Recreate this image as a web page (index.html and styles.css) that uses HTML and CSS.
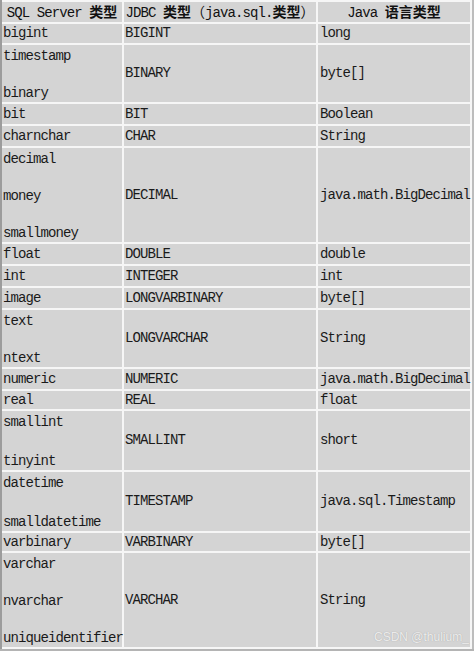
FILE: index.html
```html
<!DOCTYPE html>
<html lang="zh">
<head>
<meta charset="utf-8">
<title>SQL Server 类型映射</title>
<link rel="stylesheet" href="styles.css">
</head>
<body>
<div class="page">
  <div class="sheet">
    <div class="cell head"><span>SQL Server <span class="cjk">类型</span></span></div>
    <div class="cell head"><span>JDBC <span class="cjk">类型</span><span class="cjk paren open">（</span>java.sql.<span class="cjk">类型</span><span class="cjk paren close">）</span></span></div>
    <div class="cell head"><span>Java <span class="cjk">语言类型</span></span></div>

    <div class="cell">bigint</div>
    <div class="cell">BIGINT</div>
    <div class="cell c3">long</div>

    <div class="cell multi"><span>timestamp</span><span>binary</span></div>
    <div class="cell">BINARY</div>
    <div class="cell c3">byte[]</div>

    <div class="cell">bit</div>
    <div class="cell">BIT</div>
    <div class="cell c3">Boolean</div>

    <div class="cell">charnchar</div>
    <div class="cell">CHAR</div>
    <div class="cell c3">String</div>

    <div class="cell multi"><span>decimal</span><span>money</span><span>smallmoney</span></div>
    <div class="cell">DECIMAL</div>
    <div class="cell c3">java.math.BigDecimal</div>

    <div class="cell">float</div>
    <div class="cell">DOUBLE</div>
    <div class="cell c3">double</div>

    <div class="cell">int</div>
    <div class="cell">INTEGER</div>
    <div class="cell c3">int</div>

    <div class="cell">image</div>
    <div class="cell">LONGVARBINARY</div>
    <div class="cell c3">byte[]</div>

    <div class="cell multi"><span>text</span><span>ntext</span></div>
    <div class="cell">LONGVARCHAR</div>
    <div class="cell c3">String</div>

    <div class="cell">numeric</div>
    <div class="cell">NUMERIC</div>
    <div class="cell c3">java.math.BigDecimal</div>

    <div class="cell">real</div>
    <div class="cell">REAL</div>
    <div class="cell c3">float</div>

    <div class="cell multi"><span>smallint</span><span>tinyint</span></div>
    <div class="cell">SMALLINT</div>
    <div class="cell c3">short</div>

    <div class="cell multi"><span>datetime</span><span>smalldatetime</span></div>
    <div class="cell">TIMESTAMP</div>
    <div class="cell c3">java.sql.Timestamp</div>

    <div class="cell">varbinary</div>
    <div class="cell">VARBINARY</div>
    <div class="cell c3">byte[]</div>

    <div class="cell multi"><span>varchar</span><span>nvarchar</span><span>uniqueidentifier</span></div>
    <div class="cell">VARCHAR</div>
    <div class="cell c3">String</div>
  </div>
  <div class="watermark">CSDN @thulium_</div>
</div>
</body>
</html>
```

FILE: styles.css
```css
html, body {
  margin: 0;
  padding: 0;
}

body {
  background: #b4b4b4;
  width: 474px;
  height: 651px;
  overflow: hidden;
}

.page {
  position: relative;
  width: 474px;
  height: 651px;
}

.sheet {
  display: grid;
  grid-template-columns: 120px 192px 152px;
  grid-template-rows: 20px 19px 57px 20px 20px 94px 20px 20px 20px 57px 20px 18px 59px 59px 18px 94px;
  column-gap: 2px;
  row-gap: 2px;
  padding: 2px 2px 2px 0;
  background: #f6f6f6;
  border-left: 2px solid #9c9c9c;
  border-right: 2px solid #bdbdbd;
  font-family: "Liberation Mono", "Noto Sans CJK SC", monospace;
  font-size: 14px;
  letter-spacing: -0.9px;
  color: #1a1a1a;
}

.cell {
  background: #d4d4d4;
  display: flex;
  align-items: center;
  padding-left: 1px;
  white-space: pre;
  overflow: visible;
  line-height: 17px;
}

.c3 {
  padding-left: 2px;
}

.head {
  justify-content: center;
  padding-left: 0;
  color: #111;
}

.cjk {
  font-family: "Noto Sans CJK SC", sans-serif;
  font-size: 14px;
  font-weight: 700;
  letter-spacing: 0;
}

.paren {
  display: inline-block;
  width: 14px;
  font-weight: 400;
}

.open {
  text-align: right;
}

.close {
  text-align: left;
}

.multi {
  flex-direction: column;
  align-items: flex-start;
  justify-content: space-between;
  padding-top: 3px;
}

.watermark {
  position: absolute;
  left: 374px;
  top: 630px;
  font-family: "Liberation Sans", Arial, sans-serif;
  font-size: 12px;
  letter-spacing: 0;
  color: rgba(255, 255, 255, 0.8);
  text-shadow: 0 0 1px rgba(120, 120, 120, 0.6);
}
```
